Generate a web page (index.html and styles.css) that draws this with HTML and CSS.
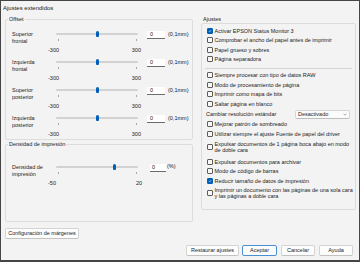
FILE: index.html
```html
<!DOCTYPE html>
<html lang="es">
<head>
<meta charset="utf-8">
<title>Ajustes extendidos</title>
<link rel="stylesheet" href="styles.css">
</head>
<body>
<div class="window">
  <div class="titlebar">Ajustes extendidos</div>
  <div class="content">
    <div class="leftcol">
      <fieldset class="group offset">
        <legend>Offset</legend>
        <div class="srow">
          <div class="slabel">Superior<br>frontal</div>
          <div class="slider">
            <div class="track"><div class="travel"><span class="thumb" style="left:50%"></span></div></div>
            <div class="ticks"><span></span><span></span></div>
            <div class="scale"><span>-300</span><span>300</span></div>
          </div>
          <div class="num">0</div>
          <div class="unit">(0,1mm)</div>
        </div>
        <div class="srow">
          <div class="slabel">Izquierda<br>frontal</div>
          <div class="slider">
            <div class="track"><div class="travel"><span class="thumb" style="left:50%"></span></div></div>
            <div class="ticks"><span></span><span></span></div>
            <div class="scale"><span>-300</span><span>300</span></div>
          </div>
          <div class="num">0</div>
          <div class="unit">(0,1mm)</div>
        </div>
        <div class="srow">
          <div class="slabel">Superior<br>posterior</div>
          <div class="slider">
            <div class="track"><div class="travel"><span class="thumb" style="left:50%"></span></div></div>
            <div class="ticks"><span></span><span></span></div>
            <div class="scale"><span>-300</span><span>300</span></div>
          </div>
          <div class="num">0</div>
          <div class="unit">(0,1mm)</div>
        </div>
        <div class="srow last">
          <div class="slabel">Izquierda<br>posterior</div>
          <div class="slider">
            <div class="track"><div class="travel"><span class="thumb" style="left:50%"></span></div></div>
            <div class="ticks"><span></span><span></span></div>
            <div class="scale"><span>-300</span><span>300</span></div>
          </div>
          <div class="num">0</div>
          <div class="unit">(0,1mm)</div>
        </div>
      </fieldset>
      <fieldset class="group density">
        <legend>Densidad de impresión</legend>
        <div class="srow">
          <div class="slabel">Densidad de<br>impresión</div>
          <div class="slider">
            <div class="track"><div class="travel"><span class="thumb" style="left:71.43%"></span></div></div>
            <div class="ticks"><span></span><span></span></div>
            <div class="scale wide"><span>-50</span><span>20</span></div>
          </div>
          <div class="num pct">0</div>
          <div class="unit pctu">(%)</div>
        </div>
      </fieldset>
      <button class="btn margins" type="button">Configuración de márgenes</button>
    </div>
    <div class="rightcol">
      <div class="shead">Ajustes</div>
      <div class="settings">
        <div class="cb on"><span class="box"><svg viewBox="0 0 6 6"><path d="M1.3 3.1 L2.5 4.3 L4.8 1.7"/></svg></span><span>Activar EPSON Status Monitor 3</span></div>
        <div class="cb"><span class="box"></span><span>Comprobar el ancho del papel antes de imprimir</span></div>
        <div class="cb"><span class="box"></span><span>Papel grueso y sobres</span></div>
        <div class="cb"><span class="box"></span><span>Página separadora</span></div>
        <div class="sep"></div>
        <div class="cb"><span class="box"></span><span>Siempre procesar con tipo de datos RAW</span></div>
        <div class="cb"><span class="box"></span><span>Modo de procesamiento de página</span></div>
        <div class="cb"><span class="box"></span><span>Imprimir como mapa de bits</span></div>
        <div class="cb"><span class="box"></span><span>Saltar página en blanco</span></div>
        <div class="comborow">
          <span class="clabel">Cambiar resolución estándar</span>
          <span class="combo"><span>Desactivado</span><svg class="chev" viewBox="0 0 5 3"><path d="M0.6 0.6 L2.5 2.3 L4.4 0.6"/></svg></span>
        </div>
        <div class="cb"><span class="box"></span><span>Mejorar patrón de sombreado</span></div>
        <div class="cb"><span class="box"></span><span>Utilizar siempre el ajuste Fuente de papel del driver</span></div>
        <div class="cb two first2"><span class="box"></span><span>Expulsar documentos de 1 página boca abajo en modo<br>de doble cara</span></div>
        <div class="cb"><span class="box"></span><span>Expulsar documentos para archivar</span></div>
        <div class="cb"><span class="box"></span><span>Modo de código de barras</span></div>
        <div class="cb on"><span class="box"><svg viewBox="0 0 6 6"><path d="M1.3 3.1 L2.5 4.3 L4.8 1.7"/></svg></span><span>Reducir tamaño de datos de impresión</span></div>
        <div class="cb two second2"><span class="box"></span><span>Imprimir un documento con las páginas de una sola cara<br>y las páginas a doble cara</span></div>
      </div>
    </div>
  </div>
  <div class="footer">
    <button class="btn restore" type="button">Restaurar ajustes</button>
    <button class="btn default" type="button">Aceptar</button>
    <button class="btn" type="button">Cancelar</button>
    <button class="btn" type="button">Ayuda</button>
  </div>
</div>
</body>
</html>
```
FILE: styles.css
```css
* { box-sizing: border-box; }
html, body { margin: 0; padding: 0; }
body {
  width: 360px;
  height: 262px;
  overflow: hidden;
  font-family: "Liberation Sans", Arial, sans-serif;
  font-size: 5.5px;
  color: #1b1b1b;
  background: #3a3a3a;
}
.window {
  width: 360px;
  height: 262px;
  border: 1px solid #454545;
  border-bottom-width: 2px;
  background: #f3f3f3;
  display: flex;
  flex-direction: column;
}
.titlebar {
  height: 14px;
  line-height: 14px;
  padding-left: 2px;
  font-size: 6px;
  color: #1a1a1a;
}
.content {
  display: grid;
  grid-template-columns: 188px 155px;
  column-gap: 8px;
  padding: 0 3px 0 4px;
  align-items: start;
}
.leftcol { display: flex; flex-direction: column; align-items: flex-start; }
fieldset.group {
  margin: 0;
  border: 1px solid #dcdcdc;
  border-radius: 2px;
  min-width: 0;
  width: 100%;
}
legend {
  font-size: 5.5px;
  line-height: 8px;
  padding: 0 1px;
  margin-left: -4px;
}
.offset { padding: 6px 0 2px 6px; }
.density { margin-top: 3px; padding: 14px 0 31px 6px; }

.srow { display: flex; height: 28px; }
.srow.last { height: 24px; }
.slabel { width: 44px; line-height: 7px; padding-top: 2px; }
.slider { width: 82px; }
.track { position: relative; height: 10px; }
.track::before {
  content: "";
  position: absolute;
  left: 0; right: 0; top: 4px;
  height: 2px;
  border-radius: 1px;
  background: #d2d2d2;
}
.travel { position: absolute; left: 2px; right: 1px; top: 0; bottom: 0; }
.thumb {
  position: absolute;
  top: 2px;
  width: 3px;
  height: 6px;
  margin-left: -1.5px;
  border-radius: 1.5px 1.5px 1px 1px;
  background: #005fb8;
}
.ticks { height: 2px; display: flex; justify-content: space-between; margin: 0 1px 0 2px; }
.ticks span { width: 1px; height: 2px; background: #a6a6a6; }
.scale {
  display: flex;
  justify-content: space-between;
  margin: 5.5px -3px 0 -8px;
  line-height: 7px;
}
.scale.wide { margin-right: -4px; }
.num {
  margin-left: 9px;
  margin-top: 2px;
  width: 18px;
  height: 8px;
  line-height: 7px;
  padding-left: 3px;
  background: #ffffff;
  border-bottom: 1px solid #6b6b6b;
  border-radius: 1px 1px 0 0;
}
.num.pct { margin-left: 12px; width: 16px; padding-left: 2px; }
.unit { margin-left: 3px; margin-top: 1px; line-height: 8px; }
.unit.pctu { margin-left: 1px; margin-top: 0; }

.btn {
  font-family: inherit;
  font-size: 5.5px;
  color: #1b1b1b;
  height: 11px;
  line-height: 9px;
  padding: 0 2px;
  background: #fdfdfd;
  border: 1px solid #d3d3d3;
  border-bottom-color: #c2c2c2;
  border-radius: 2px;
  margin: 0;
}
.margins { margin-top: 6px; width: 74px; }

.shead { line-height: 8px; padding-left: 2px; }
.settings {
  border: 1px solid #dcdcdc;
  border-radius: 2px;
  padding: 2px 4px 10px 5px;
  white-space: nowrap;
}
.cb { display: flex; align-items: center; height: 9.5px; line-height: 6px; }
.cb.two { height: auto; }
.cb.first2 { padding: 2.5px 0 4px; }
.cb.second2 { padding: 1.5px 0 0; }
.box {
  flex: none;
  width: 6px;
  height: 6px;
  margin-right: 1.5px;
  border: 0.75px solid #5c5c5c;
  border-radius: 1px;
  background: #f8f8f8;
  display: flex;
}
.cb.on .box { background: #005fb8; border-color: #005fb8; }
.box svg { width: 100%; height: 100%; }
.box svg path { fill: none; stroke: #ffffff; stroke-width: 0.8; }
.sep { height: 1px; background: #d4d4d4; margin: 4px -1px 1.5px -2px; }
.comborow { display: flex; align-items: center; height: 11px; }
.clabel { margin-left: -1px; }
.combo {
  margin-left: auto;
  margin-right: 1px;
  width: 55px;
  height: 9px;
  display: flex;
  align-items: center;
  justify-content: space-between;
  padding: 0 2px 0 2px;
  background: #fbfbfb;
  border: 1px solid #d6d6d6;
  border-bottom-color: #bdbdbd;
  border-radius: 2px;
}
.chev { width: 4px; height: 3px; }
.chev path { fill: none; stroke: #555; stroke-width: 0.6; }

.footer {
  display: flex;
  justify-content: flex-end;
  gap: 4px;
  margin-top: 6px;
  padding-right: 6px;
}
.footer .btn { width: 34px; }
.footer .btn.restore { width: 53px; margin-right: -1px; }
.footer .btn.default { width: 35px; border-color: #4a8fd6; }
```
